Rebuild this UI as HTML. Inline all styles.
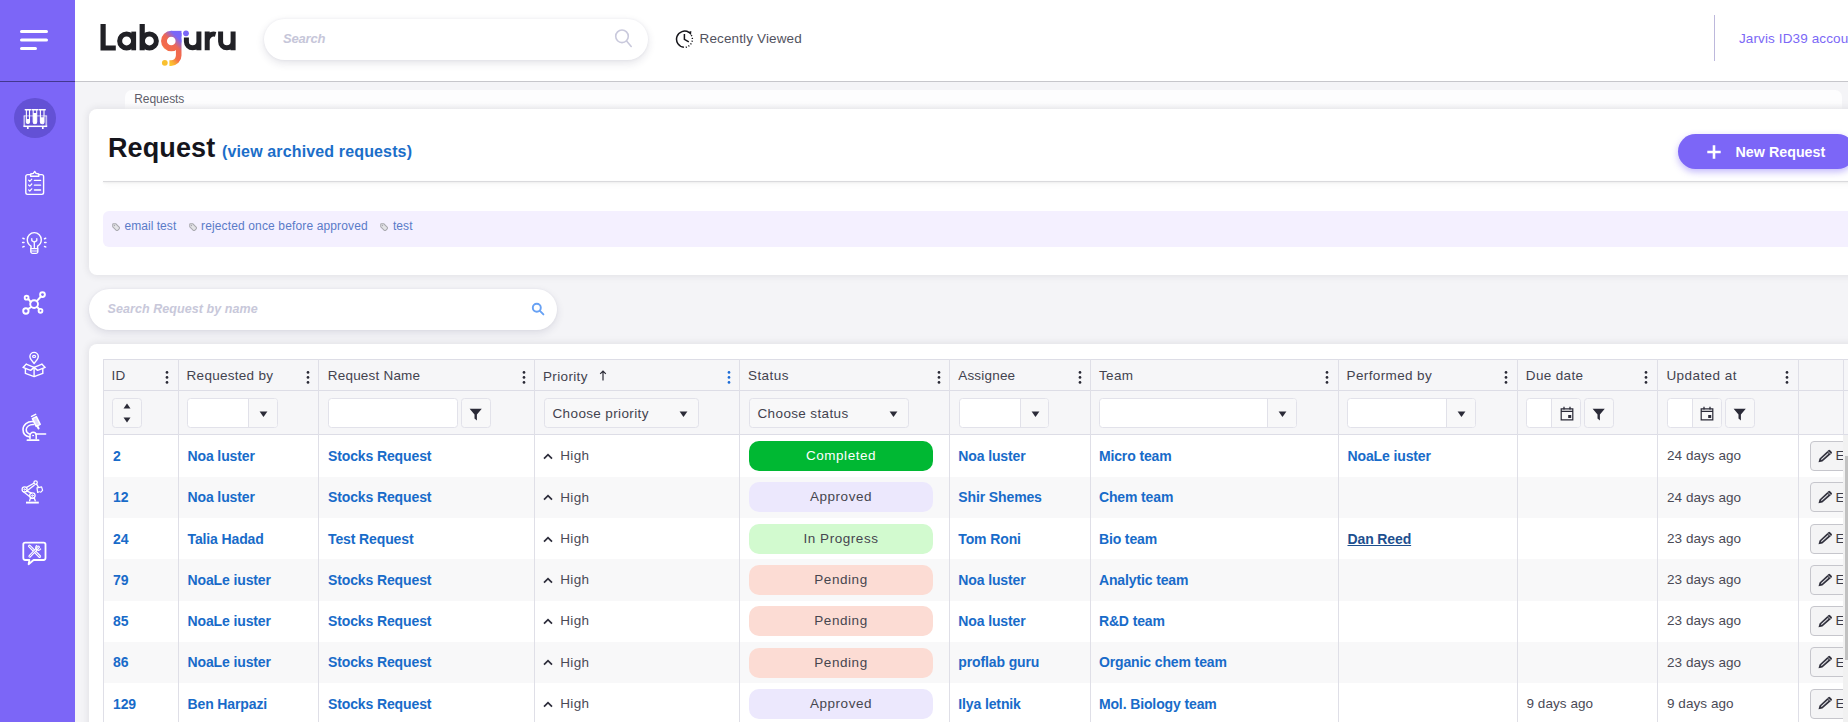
<!DOCTYPE html>
<html lang="en"><head><meta charset="utf-8"><title>Labguru - Requests</title>
<style>
*{box-sizing:border-box}
html,body{margin:0;padding:0}
body{width:1848px;height:722px;overflow:hidden;position:relative;background:#f4f4f7;font-family:"Liberation Sans",sans-serif;color:#3f3f4a;font-size:13.5px}
a{text-decoration:none;color:inherit}
#sidebar{position:absolute;left:0;top:0;width:75px;height:722px;background:#7c66f7}
#sidebar .topline{position:absolute;left:0;top:81px;width:75px;height:1px;background:#43378f}
#sidebar .act{position:absolute;left:14px;top:98px;width:42px;height:39.6px;border-radius:50%;background:#6351d5}
#sidebar svg{position:absolute}
#header{position:absolute;left:75px;top:0;width:1773px;height:81px;background:#fff}
#hline{position:absolute;left:75px;top:81px;width:1773px;height:1px;background:#c6c6cb}
#logo{position:absolute;left:95px;top:15px}
.pill{position:absolute;background:#fff;border-radius:21px}
#gsearch{left:264px;top:19px;width:384px;height:41px;box-shadow:0 3px 8px rgba(40,40,80,.13),0 0 3px rgba(40,40,80,.06)}
#gsearch .ph{position:absolute;left:19px;top:12px;font-size:13px;font-weight:bold;font-style:italic;color:#c6c6d9;letter-spacing:-.2px;line-height:15px}
#gsearch svg{position:absolute;left:348px;top:8px}
#recent{position:absolute;left:675px;top:28px}
#recent svg{position:absolute;left:0;top:.5px}
#recent .t{position:absolute;left:24.5px;top:2.5px;font-size:13.5px;color:#52525e;letter-spacing:.14px;white-space:nowrap;line-height:16px}
#hdiv{position:absolute;left:1714px;top:15px;width:1px;height:46px;background:#bdb8dc}
#acct{position:absolute;left:1739px;top:30.8px;font-size:13.5px;color:#7b68f6;white-space:nowrap;letter-spacing:.12px;line-height:16px}
#crumb{position:absolute;left:125px;top:90px;width:1717px;height:24px;border-radius:7px 7px 0 0;background:linear-gradient(#fdfdfe 0,#fdfdfe 55%,#f0f0f3 100%)}
#crumb span{position:absolute;left:9.3px;top:2px;font-size:12px;color:#5e5e6a;letter-spacing:-.09px;line-height:14px}
.card{position:absolute;background:#fff;border-radius:8px;box-shadow:0 0 8px rgba(30,30,45,.11)}
#card1{left:89px;top:109px;width:1780px;height:166px}
#title{position:absolute;left:108px;top:132.2px;font-size:27px;font-weight:bold;color:#15151c;letter-spacing:.12px;line-height:32px;white-space:nowrap}
#arch{position:absolute;left:222px;top:141.8px;font-size:16px;font-weight:bold;color:#1b6ec9;letter-spacing:.14px;line-height:20px;white-space:nowrap}
#tline{position:absolute;left:103px;top:181px;width:1760px;height:1px;background:#dadadd;box-shadow:0 1px 2px rgba(0,0,0,.10),2px 3px 5px rgba(0,0,0,.09)}
#newreq{position:absolute;left:1678px;top:134px;width:177px;height:35px;border-radius:18px;background:#7c66f7;box-shadow:0 3px 7px rgba(124,102,247,.45)}
#newreq .t{position:absolute;left:57.5px;top:9.6px;font-size:14.25px;font-weight:bold;color:#fff;line-height:17px;white-space:nowrap;letter-spacing:.03px}
#newreq svg{position:absolute;left:29px;top:11.4px}
#tags{position:absolute;left:103px;top:211px;width:1760px;height:36px;border-radius:6px;background:#f4f0ff}
#tags .tg{position:absolute;top:8px;font-size:12px;color:#5a7bc8;line-height:14px;white-space:nowrap;letter-spacing:.04px}
#tags svg{position:absolute;top:11px}
#rsearch{left:89px;top:289px;width:468px;height:41px;box-shadow:0 3px 8px rgba(40,40,80,.11),0 0 3px rgba(40,40,80,.05)}
#rsearch .ph{position:absolute;left:18.5px;top:13px;font-size:12.5px;font-weight:bold;font-style:italic;color:#c8c8da;letter-spacing:.07px;line-height:15px;white-space:nowrap}
#rsearch svg{position:absolute;left:442px;top:13px}
#card2{position:absolute;left:89px;top:344px;width:1780px;height:420px;background:#fff;border-radius:8px;box-shadow:0 0 8px rgba(30,30,45,.11)}
#grid{position:absolute;left:0;top:0;width:1848px;height:722px;letter-spacing:.2px}
.ghead{position:absolute;left:103px;top:359px;width:1760px;height:76px;background:#f6f6f8;border-top:1px solid #dddde6;border-bottom:1px solid #dddde6}
.hsep{position:absolute;left:103px;top:390px;width:1760px;height:1px;background:#dddde6}
.th{position:absolute;top:367px;line-height:16px;color:#43434f;white-space:nowrap}
.dots{position:absolute;top:371px}
.row{position:absolute;left:104px;width:1740px;height:41.25px;background:#fff}
.row.alt{background:#f8f8f9}
.row>*{position:absolute;white-space:nowrap}
.row .lk,.row .tx,.row .pri .tx{top:12.9px;line-height:16px}
.row .lk{font-weight:bold;color:#186bc9;margin-left:-104px;font-size:14px;letter-spacing:-.12px;top:12.7px}
.row .lk.ul{color:#1d4f8f;text-decoration:underline}
.row .tx{color:#4a4a56;margin-left:-104px;letter-spacing:.05px}
.row .pri{left:0;top:0}
.row .pri .tx{position:absolute;letter-spacing:.3px}
.row .chev{position:absolute;left:439px;top:17.5px}
.badge{left:645px;top:5.5px;width:184px;height:30px;border-radius:10px;text-align:center;line-height:30px;color:#46464f;letter-spacing:.55px}
.bc{background:#00b833;color:#fff}
.ba{background:#ece8fd}
.bp{background:#d2facf}
.bd{background:#fcdcd4}
.edit{left:1706px;top:5.5px;width:60px;height:30px;border:1px solid #c6c6cc;border-radius:4px;background:#f4f4f5}
.edit .pen{position:absolute;left:7px;top:6.9px}
.edit .et{position:absolute;left:24.6px;top:6.3px;line-height:16px;color:#3c3c48}
.vl{position:absolute;top:359px;width:1px;height:370px;background:#dfdfe7}
.vl2{position:absolute;left:1843px;top:359px;width:1px;height:76px;background:#dfdfe7}
.sbtrack{position:absolute;left:1843px;top:435px;width:17px;height:300px;background:#f1f1f1}
.sbthumb{position:absolute;left:1845px;top:456px;width:13px;height:204px;background:#c1c1c1}
.fbox{position:absolute;top:398px;height:30px;border:1px solid #e2e2ea;border-radius:3.5px;background:#fff;overflow:hidden}
.fbox.gray{background:#f8f8f9}
.fbox .sep{position:absolute;top:0;width:1px;height:30px;background:#e1e1e9}
.fbox .btn{position:absolute;top:0;height:30px;background:#f8f8f9}
.fbox svg{position:absolute}
.fbox .t{position:absolute;left:7.5px;top:6.5px;letter-spacing:.37px;line-height:16px;color:#43434f;white-space:nowrap}

</style></head>
<body>
<div id="sidebar">
<div class="act"></div>
<svg width="75" height="722" viewBox="0 0 75 722" fill="none" stroke="#fff" stroke-linecap="round" stroke-linejoin="round" style="left:0;top:0">
<!-- hamburger -->
<g stroke-width="3">
<path d="M21.5 31.5H46.5M21.5 40H46.5M21.5 48.5H35.5"/>
</g>
<!-- test tubes (active) -->
<g stroke-width="1.1">
<path d="M24.3 115.4V126.2M46.3 115.4V126.2" stroke-width="1.7" stroke-opacity=".62" stroke-linecap="butt"/>
<path d="M23.4 126.3H47.2" stroke-width="1.5" stroke-linecap="butt"/>
<path d="M27.8 127V129M42.8 127V129" stroke-width="1.7" stroke-linecap="butt"/>
<path d="M24.3 115.9H46.3" stroke-width="1.1" stroke-opacity=".55"/>
<path d="M25.3 109.7H30.6" stroke-width="1.5"/>
<path d="M26.4 110.2V122A1.55 1.55 0 0 0 29.5 122V110.2"/>
<path d="M26.4 118.9H29.5V122A1.55 1.55 0 0 1 26.4 122Z" fill="#fff" stroke="none"/>
<path d="M32.1 109.7H37.9" stroke-width="1.5"/>
<path d="M33.2 110.2V122A1.75 1.75 0 0 0 36.7 122V110.2"/>
<path d="M33.2 113H36.7V122A1.75 1.75 0 0 1 33.2 122Z" fill="#fff" stroke="none"/>
<path d="M39.4 109.7H45.2" stroke-width="1.5"/>
<path d="M40.4 110.2V122A1.8 1.8 0 0 0 44 122V110.2"/>
<path d="M40.4 117.2H44V122A1.8 1.8 0 0 1 40.4 122Z" fill="#fff" stroke="none"/>
</g>
<!-- clipboard -->
<g stroke-width="1.4">
<path d="M30.6 174.6H27.6A1.8 1.8 0 0 0 25.8 176.4V192.6A1.8 1.8 0 0 0 27.6 194.4H41.8A1.8 1.8 0 0 0 43.6 192.6V176.4A1.8 1.8 0 0 0 41.8 174.6H38.8"/>
<path d="M30.6 176.2V174L33.4 173.4L34.7 171.4L36 173.4L38.8 174V176.2Z"/>
<path d="M28.6 180.2L29.8 181.4L31.8 179.2M28.6 185L29.8 186.2L31.8 184M28.6 189.8L29.8 191L31.8 188.8" stroke-width="1.2"/>
<path d="M34.4 180.4H40.6M34.4 185.2H40.6M34.4 190H40.6" stroke-width="1.3"/>
</g>
<!-- bulb -->
<g stroke-width="1.4">
<path d="M31 248.4V246.2C28.6 244.8 27.3 242.4 27.3 239.6A7 7 0 0 1 41.3 239.6C41.3 242.4 40 244.8 37.6 246.2V248.4"/>
<path d="M30.8 248.6H37.8V251.6A1.8 1.8 0 0 1 36 253.4H32.6A1.8 1.8 0 0 1 30.8 251.6Z"/>
<path d="M31 251H37.6" stroke-width="1.1"/>
<path d="M34.3 247.4V242.2M31.8 238.6V240.6L34.3 242.2L36.8 240.6V238.6" stroke-width="1.3"/>
<path d="M22.9 238.3L24.1 238.7M22.6 242.6H24M22.9 246.9L24.1 246.5M45.7 238.3L44.5 238.7M46 242.6H44.6M45.7 246.9L44.5 246.5" stroke-width="1.5"/>
</g>
<!-- molecule -->
<g stroke-width="1.9">
<circle cx="34.1" cy="304.1" r="3.9"/>
<circle cx="42.5" cy="294.6" r="2.4"/>
<circle cx="26.6" cy="297.7" r="1.9"/>
<circle cx="25.9" cy="311" r="2.7"/>
<circle cx="40.5" cy="310.8" r="1.9"/>
<path d="M36.8 301.1L40.9 296.5M30.7 301.9L28.3 298.9M31.2 307L27.9 309.1M37.2 307L39.2 309.2"/>
</g>
<!-- box with pin -->
<g stroke-width="1.4">
<path d="M34.1 363.4C31.4 360.6 29.9 358.6 29.9 356.6A4.2 4.2 0 0 1 38.3 356.6C38.3 358.6 36.8 360.6 34.1 363.4Z"/>
<ellipse cx="34.1" cy="356.4" rx="1.5" ry="1.1" stroke-width="1.2"/>
<path d="M26.2 364.2L34.1 367.4L42 364.2"/>
<path d="M26.2 364.2L23 367.4L30.6 370.4L34.1 367.4L37.6 370.4L45.2 367.4L42 364.2"/>
<path d="M25.4 368.8V373.4L34.1 376.6L42.8 373.4V368.8"/>
<path d="M34.1 368V376.4"/>
</g>
<!-- microscope -->
<g stroke-width="1.5">
<path d="M31.6 416.4L35.6 414.4" stroke-width="1.6"/>
<path d="M32.4 418.6L36.4 416.6L40.2 424.4L36.2 426.4Z" fill="#fff" fill-opacity=".75"/>
<path d="M37.4 426.2L38.6 428.4" stroke-width="2"/>
<path d="M33.4 421.6C27.4 421 23 425 23 429.6C23 433.4 25.6 436.4 29.6 437" stroke-width="1.6"/>
<path d="M33.8 424.6C29.2 424.4 26.2 426.8 26.2 429.8C26.2 431.6 27.2 433.2 29.4 434"/>
<path d="M30 438.8V435.4A3.1 3.1 0 0 1 36.2 435.4V438.8"/>
<path d="M36.4 434H45.6" stroke-width="1.6"/>
<path d="M27.4 440.2H38.6" stroke-width="1.7"/>
<circle cx="33" cy="435.6" r=".5" stroke-width="1"/>
</g>
<!-- robot arm -->
<g stroke-width="1.3">
<circle cx="24.6" cy="489.4" r="2.5"/>
<circle cx="24.6" cy="489.4" r=".7" stroke-width="1"/>
<circle cx="32.4" cy="495.6" r="2.7"/>
<circle cx="32.4" cy="495.6" r=".8" stroke-width="1"/>
<circle cx="35.6" cy="482.6" r="1.7"/>
<path d="M26.6 487.4L33.8 483.2M26.2 491.6L34.2 485.2" />
<path d="M23.2 491.6L29.8 496.8M26.6 490.8L31.4 493.2"/>
<path d="M36.6 484.2L38.4 487.2"/>
<path d="M37 487.8L41.6 486.8L42.6 490.4L40.6 492.2M37 487.8L37.6 492.4L39.4 491.8" stroke-width="1.2"/>
<path d="M29.6 500.8L30.4 498.2H34.4L35.2 500.8"/>
<path d="M26 502.6H38.8" stroke-width="1.9" stroke-linecap="butt"/>
</g>
<!-- chat with tools -->
<g stroke-width="1.8">
<path d="M25.2 542.6H43.6A1.9 1.9 0 0 1 45.5 544.5V558.1A1.9 1.9 0 0 1 43.6 560H33.6L28.6 564.2L29.4 560H25.2A1.9 1.9 0 0 1 23.3 558.1V544.5A1.9 1.9 0 0 1 25.2 542.6Z"/>
<path d="M29.4 546L39.6 556.4" stroke-width="3"/>
<path d="M29.4 546L39.6 556.4" stroke="#7c66f7" stroke-width=".9"/>
<path d="M38.6 547L29.8 556.2" stroke-width="2.8"/>
<path d="M38.6 547L29.8 556.2" stroke="#7c66f7" stroke-width=".8"/>
<path d="M36.8 545.6A2.6 2.6 0 1 0 40.6 549" stroke-width="1.3"/>
</g>
</svg>
<div class="topline"></div>
</div>
<div id="header"></div>
<div id="hline"></div>
<svg id="logo" width="150" height="60" viewBox="0 0 150 60">
<defs>
<linearGradient id="gg" gradientUnits="userSpaceOnUse" x1="88" y1="12" x2="62.5" y2="37.5">
<stop offset="0" stop-color="#7a66fa"/><stop offset=".31" stop-color="#7a66f8"/><stop offset=".52" stop-color="#ef6852"/><stop offset=".74" stop-color="#f36b4a"/><stop offset=".9" stop-color="#fbb233"/><stop offset="1" stop-color="#fdca2f"/>
</linearGradient>
</defs>
<g fill="none" stroke="#212126" stroke-width="5" stroke-linecap="butt">
<path d="M8.1 9V33H20.8" stroke-width="5.2"/>
<circle cx="31.6" cy="25.95" r="6.95"/>
<path d="M38.7 16.6V35.3" stroke-width="4.8"/>
<path d="M47.2 9V35.3" stroke-width="5.2"/>
<circle cx="54.4" cy="25.95" r="6.95"/>
<path d="M91.4 22.4V26.6A6.25 6.25 0 0 0 103.9 26.6V16.6M103.9 24V35.3"/>
<path d="M112.2 16.6V35.3M112.2 26A6.6 6.6 0 0 1 120.6 19.3"/>
<path d="M125.6 16.6V26.6A6.25 6.25 0 0 0 138.1 26.6V16.6M138.1 24V35.3"/>
</g>
<g fill="none" stroke="url(#gg)" stroke-width="5.6">
<circle cx="76.3" cy="26" r="7.3" stroke-width="5.9"/>
<path d="M76.3 18.65H86.5" stroke-width="5.6"/>
<path d="M83.7 18V40.5A7.6 7.6 0 0 1 76.1 48.1H74.4"/>
</g>
<circle cx="69.8" cy="47.8" r="2.9" fill="#f9c030"/>
<circle cx="91" cy="18.3" r="2.9" fill="#7a66f8"/>
</svg>
<div class="pill" id="gsearch"><span class="ph">Search</span>
<svg width="24" height="24" viewBox="0 0 24 24" fill="none" stroke="#c9c9dc" stroke-width="1.6" stroke-linecap="round"><circle cx="10" cy="9.3" r="6.3"/><path d="M14.6 14.1L19.2 19.4"/></svg>
</div>
<div id="recent">
<svg width="20" height="20" viewBox="0 0 20 20" fill="none" stroke="#15151a" stroke-width="1.5" stroke-linecap="butt">
<path d="M8.9 18.3A8.1 8.1 0 1 1 14 3.4"/>
<path d="M16.3 6.2A8.1 8.1 0 0 1 10.4 18.3" stroke-dasharray="1.1 1.75" stroke-width="1.4"/>
<path d="M12.7 3.2L16.3 1.9L16.1 6.1Z" fill="#15151a" stroke="none"/>
<path d="M9.4 5V10.3L13.8 12.8" stroke-width="1.5"/>
</svg>
<span class="t">Recently Viewed</span>
</div>
<div id="hdiv"></div>
<div id="acct">Jarvis ID39 account</div>
<div id="crumb"><span>Requests</span></div>
<div class="card" id="card1"></div>
<div id="title">Request</div>
<a id="arch">(view archived requests)</a>
<div id="tline"></div>
<div id="newreq">
<svg width="14" height="14" viewBox="0 0 14 14"><path d="M7 .3V13.7M.3 7H13.7" stroke="#fff" stroke-width="2.6" fill="none"/></svg>
<span class="t">New Request</span></div>
<div id="tags">
<svg style="left:8.7px;top:11.9px" width="8.4" height="8.4" viewBox="0 0 10 10"><path d="M.9 1.6A.7.7 0 0 1 1.6 .9H4.6L9.1 5.4A.8.8 0 0 1 9.1 6.5L6.5 9.1A.8.8 0 0 1 5.4 9.1L.9 4.6Z" fill="#e3e3e7" stroke="#a9a9af" stroke-width="1.25"/><circle cx="3" cy="3" r=".8" fill="#a9a9af"/></svg>
<span class="tg" style="left:21.5px">email test</span>
<svg style="left:86.0px;top:11.9px" width="8.4" height="8.4" viewBox="0 0 10 10"><path d="M.9 1.6A.7.7 0 0 1 1.6 .9H4.6L9.1 5.4A.8.8 0 0 1 9.1 6.5L6.5 9.1A.8.8 0 0 1 5.4 9.1L.9 4.6Z" fill="#e3e3e7" stroke="#a9a9af" stroke-width="1.25"/><circle cx="3" cy="3" r=".8" fill="#a9a9af"/></svg>
<span class="tg" style="left:98px;letter-spacing:.14px">rejected once before approved</span>
<svg style="left:276.7px;top:11.9px" width="8.4" height="8.4" viewBox="0 0 10 10"><path d="M.9 1.6A.7.7 0 0 1 1.6 .9H4.6L9.1 5.4A.8.8 0 0 1 9.1 6.5L6.5 9.1A.8.8 0 0 1 5.4 9.1L.9 4.6Z" fill="#e3e3e7" stroke="#a9a9af" stroke-width="1.25"/><circle cx="3" cy="3" r=".8" fill="#a9a9af"/></svg>
<span class="tg" style="left:290px">test</span>
</div>
<div class="pill" id="rsearch"><span class="ph">Search Request by name</span>
<svg width="14" height="14" viewBox="0 0 14 14" fill="none" stroke="#67a1f4" stroke-width="1.9" stroke-linecap="round"><circle cx="5.8" cy="5.8" r="4"/><path d="M8.9 8.9L12.4 12.4"/></svg>
</div>
<div id="card2"></div>
<div id="grid">
<div class="ghead"></div>
<div class="hsep"></div>
<span class="th" style="left:111.6px;top:367.7px;letter-spacing:0.2px">ID</span><svg class="dots" style="left:165.0px" width="4" height="13" viewBox="0 0 4 13"><g fill="#2a2a36"><circle cx="2" cy="1.4" r="1.35"/><circle cx="2" cy="6.4" r="1.35"/><circle cx="2" cy="11.4" r="1.35"/></g></svg>
<span class="th" style="left:186.6px;top:367.7px;letter-spacing:0.28px">Requested by</span><svg class="dots" style="left:305.5px" width="4" height="13" viewBox="0 0 4 13"><g fill="#2a2a36"><circle cx="2" cy="1.4" r="1.35"/><circle cx="2" cy="6.4" r="1.35"/><circle cx="2" cy="11.4" r="1.35"/></g></svg>
<span class="th" style="left:327.8px;top:367.7px;letter-spacing:0.2px">Request Name</span><svg class="dots" style="left:521.5px" width="4" height="13" viewBox="0 0 4 13"><g fill="#2a2a36"><circle cx="2" cy="1.4" r="1.35"/><circle cx="2" cy="6.4" r="1.35"/><circle cx="2" cy="11.4" r="1.35"/></g></svg>
<span class="th" style="left:543.0px;top:368.7px;letter-spacing:0.35px">Priority</span><svg class="dots" style="left:726.5px" width="4" height="13" viewBox="0 0 4 13"><g fill="#1c6bd6"><circle cx="2" cy="1.4" r="1.35"/><circle cx="2" cy="6.4" r="1.35"/><circle cx="2" cy="11.4" r="1.35"/></g></svg>
<span class="th" style="left:748.0px;top:367.7px;letter-spacing:0.43px">Status</span><svg class="dots" style="left:936.5px" width="4" height="13" viewBox="0 0 4 13"><g fill="#2a2a36"><circle cx="2" cy="1.4" r="1.35"/><circle cx="2" cy="6.4" r="1.35"/><circle cx="2" cy="11.4" r="1.35"/></g></svg>
<span class="th" style="left:958.2px;top:367.7px;letter-spacing:0.2px">Assignee</span><svg class="dots" style="left:1077.5px" width="4" height="13" viewBox="0 0 4 13"><g fill="#2a2a36"><circle cx="2" cy="1.4" r="1.35"/><circle cx="2" cy="6.4" r="1.35"/><circle cx="2" cy="11.4" r="1.35"/></g></svg>
<span class="th" style="left:1098.9px;top:367.7px;letter-spacing:0.37px">Team</span><svg class="dots" style="left:1325.0px" width="4" height="13" viewBox="0 0 4 13"><g fill="#2a2a36"><circle cx="2" cy="1.4" r="1.35"/><circle cx="2" cy="6.4" r="1.35"/><circle cx="2" cy="11.4" r="1.35"/></g></svg>
<span class="th" style="left:1346.6px;top:367.7px;letter-spacing:0.37px">Performed by</span><svg class="dots" style="left:1504.0px" width="4" height="13" viewBox="0 0 4 13"><g fill="#2a2a36"><circle cx="2" cy="1.4" r="1.35"/><circle cx="2" cy="6.4" r="1.35"/><circle cx="2" cy="11.4" r="1.35"/></g></svg>
<span class="th" style="left:1525.8px;top:367.7px;letter-spacing:0.36px">Due date</span><svg class="dots" style="left:1644.4px" width="4" height="13" viewBox="0 0 4 13"><g fill="#2a2a36"><circle cx="2" cy="1.4" r="1.35"/><circle cx="2" cy="6.4" r="1.35"/><circle cx="2" cy="11.4" r="1.35"/></g></svg>
<span class="th" style="left:1666.4px;top:367.7px;letter-spacing:0.44px">Updated at</span><svg class="dots" style="left:1785.3px" width="4" height="13" viewBox="0 0 4 13"><g fill="#2a2a36"><circle cx="2" cy="1.4" r="1.35"/><circle cx="2" cy="6.4" r="1.35"/><circle cx="2" cy="11.4" r="1.35"/></g></svg>
<svg style="position:absolute;left:598.5px;top:369.5px" width="8" height="11" viewBox="0 0 8 11"><path d="M4 10.4V1.2M1.2 3.8L4 1L6.8 3.8" fill="none" stroke="#2a2a36" stroke-width="1.2"/></svg>
<div class="fbox gray" style="left:112.0px;width:30.0px"><svg style="left:10.4px;top:4.3px" width="8" height="6" viewBox="0 0 8 6"><path d="M.5 5.4H7.5L4 .6Z" fill="#2b2b38"/></svg><svg style="left:10.4px;top:17.9px" width="8" height="6" viewBox="0 0 8 6"><path d="M.5 .6H7.5L4 5.4Z" fill="#2b2b38"/></svg></div>
<div class="fbox " style="left:187.0px;width:91.0px"><div class="btn" style="left:61.4px;width:29.6px"></div><div class="sep" style="left:60.4px"></div><svg style="left:70.7px;top:11.9px" width="9" height="7" viewBox="0 0 9 7"><path d="M.6 .4H8.4L4.5 6.1Z" fill="#2b2b38"/></svg></div>
<div class="fbox " style="left:328.0px;width:130.0px"></div>
<div class="fbox gray" style="left:461.0px;width:30.0px"><svg style="left:6.9px;top:9.2px" width="14" height="14" viewBox="0 0 14 14"><path d="M.6 .8H12.8L7.9 6.4V12.4L5.5 10.4V6.4Z" fill="#2b2b38"/></svg></div>
<div class="fbox gray" style="left:544.0px;width:155.0px"><span class="t">Choose priority</span><svg style="left:134.0px;top:11.9px" width="9" height="7" viewBox="0 0 9 7"><path d="M.6 .4H8.4L4.5 6.1Z" fill="#2b2b38"/></svg></div>
<div class="fbox gray" style="left:749.0px;width:160.0px"><span class="t">Choose status</span><svg style="left:139.0px;top:11.9px" width="9" height="7" viewBox="0 0 9 7"><path d="M.6 .4H8.4L4.5 6.1Z" fill="#2b2b38"/></svg></div>
<div class="fbox " style="left:959.0px;width:90.0px"><div class="btn" style="left:60.5px;width:29.5px"></div><div class="sep" style="left:59.5px"></div><svg style="left:70.5px;top:11.9px" width="9" height="7" viewBox="0 0 9 7"><path d="M.6 .4H8.4L4.5 6.1Z" fill="#2b2b38"/></svg></div>
<div class="fbox " style="left:1099.0px;width:198.0px"><div class="btn" style="left:168.2px;width:29.8px"></div><div class="sep" style="left:167.2px"></div><svg style="left:178.0px;top:11.9px" width="9" height="7" viewBox="0 0 9 7"><path d="M.6 .4H8.4L4.5 6.1Z" fill="#2b2b38"/></svg></div>
<div class="fbox " style="left:1347.0px;width:129.0px"><div class="btn" style="left:99.4px;width:29.6px"></div><div class="sep" style="left:98.4px"></div><svg style="left:109.1px;top:11.9px" width="9" height="7" viewBox="0 0 9 7"><path d="M.6 .4H8.4L4.5 6.1Z" fill="#2b2b38"/></svg></div>
<div class="fbox " style="left:1526.0px;width:55.0px"><div class="btn" style="left:25.0px;width:30.0px"></div><div class="sep" style="left:24.0px"></div><svg style="left:32.8px;top:6.8px" width="14" height="15" viewBox="0 0 14 15"><path d="M1.2 2.8H12.8V13.8H1.2Z M1.2 5.4H12.8" fill="none" stroke="#2b2b38" stroke-width="1.2"/><path d="M4 .8V3.4M10 .8V3.4" stroke="#2b2b38" stroke-width="1.3"/><rect x="8.2" y="9" width="3" height="3" fill="#2b2b38"/></svg></div>
<div class="fbox gray" style="left:1584.0px;width:30.0px"><svg style="left:7.1px;top:9.2px" width="14" height="14" viewBox="0 0 14 14"><path d="M.6 .8H12.8L7.9 6.4V12.4L5.5 10.4V6.4Z" fill="#2b2b38"/></svg></div>
<div class="fbox " style="left:1667.0px;width:55.0px"><div class="btn" style="left:24.8px;width:30.2px"></div><div class="sep" style="left:23.8px"></div><svg style="left:32.4px;top:6.8px" width="14" height="15" viewBox="0 0 14 15"><path d="M1.2 2.8H12.8V13.8H1.2Z M1.2 5.4H12.8" fill="none" stroke="#2b2b38" stroke-width="1.2"/><path d="M4 .8V3.4M10 .8V3.4" stroke="#2b2b38" stroke-width="1.3"/><rect x="8.2" y="9" width="3" height="3" fill="#2b2b38"/></svg></div>
<div class="fbox gray" style="left:1725.0px;width:30.0px"><svg style="left:7.0px;top:9.2px" width="14" height="14" viewBox="0 0 14 14"><path d="M.6 .8H12.8L7.9 6.4V12.4L5.5 10.4V6.4Z" fill="#2b2b38"/></svg></div>
<div class="row" style="top:435.5px"><a class="lk" style="left:113px">2</a><a class="lk" style="left:187.5px">Noa luster</a><a class="lk" style="left:328px">Stocks Request</a><span class="pri"><svg class="chev" width="10" height="7" viewBox="0 0 10 7"><path d="M1 5.6 L5 1.6 L9 5.6" fill="none" stroke="#2c2c3a" stroke-width="1.7"/></svg><span class="tx" style="left:560.3px">High</span></span><span class="badge bc">Completed</span><a class="lk" style="left:958.3px">Noa luster</a><a class="lk" style="left:1098.9px">Micro team</a><a class="lk" style="left:1347.5px">NoaLe iuster</a><span class="tx" style="left:1667px">24 days ago</span><span class="edit"><svg class="pen" width="15" height="14" viewBox="0 0 15 14"><path d="M.5 13.3L1.5 9.5L10.3 1.2A1.25 1.25 0 0 1 12.1 1.2L13.6 2.7A1.25 1.25 0 0 1 13.6 4.5L4.4 12.6Z" fill="#32323e"/><path d="M3.3 10.7L10.2 4.3" stroke="#e6e6ea" stroke-width="1.1"/><path d="M10.1 2.5L12.4 4.8" stroke="#f4f4f5" stroke-width=".8"/></svg><span class="et">Edit</span></span></div>
<div class="row alt" style="top:476.75px"><a class="lk" style="left:113px">12</a><a class="lk" style="left:187.5px">Noa luster</a><a class="lk" style="left:328px">Stocks Request</a><span class="pri"><svg class="chev" width="10" height="7" viewBox="0 0 10 7"><path d="M1 5.6 L5 1.6 L9 5.6" fill="none" stroke="#2c2c3a" stroke-width="1.7"/></svg><span class="tx" style="left:560.3px">High</span></span><span class="badge ba">Approved</span><a class="lk" style="left:958.3px">Shir Shemes</a><a class="lk" style="left:1098.9px">Chem team</a><span class="tx" style="left:1667px">24 days ago</span><span class="edit"><svg class="pen" width="15" height="14" viewBox="0 0 15 14"><path d="M.5 13.3L1.5 9.5L10.3 1.2A1.25 1.25 0 0 1 12.1 1.2L13.6 2.7A1.25 1.25 0 0 1 13.6 4.5L4.4 12.6Z" fill="#32323e"/><path d="M3.3 10.7L10.2 4.3" stroke="#e6e6ea" stroke-width="1.1"/><path d="M10.1 2.5L12.4 4.8" stroke="#f4f4f5" stroke-width=".8"/></svg><span class="et">Edit</span></span></div>
<div class="row" style="top:518.0px"><a class="lk" style="left:113px">24</a><a class="lk" style="left:187.5px">Talia Hadad</a><a class="lk" style="left:328px">Test Request</a><span class="pri"><svg class="chev" width="10" height="7" viewBox="0 0 10 7"><path d="M1 5.6 L5 1.6 L9 5.6" fill="none" stroke="#2c2c3a" stroke-width="1.7"/></svg><span class="tx" style="left:560.3px">High</span></span><span class="badge bp">In Progress</span><a class="lk" style="left:958.3px">Tom Roni</a><a class="lk" style="left:1098.9px">Bio team</a><a class="lk ul" style="left:1347.5px">Dan Reed</a><span class="tx" style="left:1667px">23 days ago</span><span class="edit"><svg class="pen" width="15" height="14" viewBox="0 0 15 14"><path d="M.5 13.3L1.5 9.5L10.3 1.2A1.25 1.25 0 0 1 12.1 1.2L13.6 2.7A1.25 1.25 0 0 1 13.6 4.5L4.4 12.6Z" fill="#32323e"/><path d="M3.3 10.7L10.2 4.3" stroke="#e6e6ea" stroke-width="1.1"/><path d="M10.1 2.5L12.4 4.8" stroke="#f4f4f5" stroke-width=".8"/></svg><span class="et">Edit</span></span></div>
<div class="row alt" style="top:559.25px"><a class="lk" style="left:113px">79</a><a class="lk" style="left:187.5px">NoaLe iuster</a><a class="lk" style="left:328px">Stocks Request</a><span class="pri"><svg class="chev" width="10" height="7" viewBox="0 0 10 7"><path d="M1 5.6 L5 1.6 L9 5.6" fill="none" stroke="#2c2c3a" stroke-width="1.7"/></svg><span class="tx" style="left:560.3px">High</span></span><span class="badge bd">Pending</span><a class="lk" style="left:958.3px">Noa luster</a><a class="lk" style="left:1098.9px">Analytic team</a><span class="tx" style="left:1667px">23 days ago</span><span class="edit"><svg class="pen" width="15" height="14" viewBox="0 0 15 14"><path d="M.5 13.3L1.5 9.5L10.3 1.2A1.25 1.25 0 0 1 12.1 1.2L13.6 2.7A1.25 1.25 0 0 1 13.6 4.5L4.4 12.6Z" fill="#32323e"/><path d="M3.3 10.7L10.2 4.3" stroke="#e6e6ea" stroke-width="1.1"/><path d="M10.1 2.5L12.4 4.8" stroke="#f4f4f5" stroke-width=".8"/></svg><span class="et">Edit</span></span></div>
<div class="row" style="top:600.5px"><a class="lk" style="left:113px">85</a><a class="lk" style="left:187.5px">NoaLe iuster</a><a class="lk" style="left:328px">Stocks Request</a><span class="pri"><svg class="chev" width="10" height="7" viewBox="0 0 10 7"><path d="M1 5.6 L5 1.6 L9 5.6" fill="none" stroke="#2c2c3a" stroke-width="1.7"/></svg><span class="tx" style="left:560.3px">High</span></span><span class="badge bd">Pending</span><a class="lk" style="left:958.3px">Noa luster</a><a class="lk" style="left:1098.9px">R&amp;D team</a><span class="tx" style="left:1667px">23 days ago</span><span class="edit"><svg class="pen" width="15" height="14" viewBox="0 0 15 14"><path d="M.5 13.3L1.5 9.5L10.3 1.2A1.25 1.25 0 0 1 12.1 1.2L13.6 2.7A1.25 1.25 0 0 1 13.6 4.5L4.4 12.6Z" fill="#32323e"/><path d="M3.3 10.7L10.2 4.3" stroke="#e6e6ea" stroke-width="1.1"/><path d="M10.1 2.5L12.4 4.8" stroke="#f4f4f5" stroke-width=".8"/></svg><span class="et">Edit</span></span></div>
<div class="row alt" style="top:641.75px"><a class="lk" style="left:113px">86</a><a class="lk" style="left:187.5px">NoaLe iuster</a><a class="lk" style="left:328px">Stocks Request</a><span class="pri"><svg class="chev" width="10" height="7" viewBox="0 0 10 7"><path d="M1 5.6 L5 1.6 L9 5.6" fill="none" stroke="#2c2c3a" stroke-width="1.7"/></svg><span class="tx" style="left:560.3px">High</span></span><span class="badge bd" style="top:6.5px">Pending</span><a class="lk" style="left:958.3px">proflab guru</a><a class="lk" style="left:1098.9px">Organic chem team</a><span class="tx" style="left:1667px">23 days ago</span><span class="edit"><svg class="pen" width="15" height="14" viewBox="0 0 15 14"><path d="M.5 13.3L1.5 9.5L10.3 1.2A1.25 1.25 0 0 1 12.1 1.2L13.6 2.7A1.25 1.25 0 0 1 13.6 4.5L4.4 12.6Z" fill="#32323e"/><path d="M3.3 10.7L10.2 4.3" stroke="#e6e6ea" stroke-width="1.1"/><path d="M10.1 2.5L12.4 4.8" stroke="#f4f4f5" stroke-width=".8"/></svg><span class="et">Edit</span></span></div>
<div class="row last" style="top:683.0px"><a class="lk" style="left:113px">129</a><a class="lk" style="left:187.5px">Ben Harpazi</a><a class="lk" style="left:328px">Stocks Request</a><span class="pri"><svg class="chev" width="10" height="7" viewBox="0 0 10 7"><path d="M1 5.6 L5 1.6 L9 5.6" fill="none" stroke="#2c2c3a" stroke-width="1.7"/></svg><span class="tx" style="left:560.3px">High</span></span><span class="badge ba">Approved</span><a class="lk" style="left:958.3px">Ilya letnik</a><a class="lk" style="left:1098.9px">Mol. Biology team</a><span class="tx" style="left:1526.5px">9 days ago</span><span class="tx" style="left:1667px">9 days ago</span><span class="edit"><svg class="pen" width="15" height="14" viewBox="0 0 15 14"><path d="M.5 13.3L1.5 9.5L10.3 1.2A1.25 1.25 0 0 1 12.1 1.2L13.6 2.7A1.25 1.25 0 0 1 13.6 4.5L4.4 12.6Z" fill="#32323e"/><path d="M3.3 10.7L10.2 4.3" stroke="#e6e6ea" stroke-width="1.1"/><path d="M10.1 2.5L12.4 4.8" stroke="#f4f4f5" stroke-width=".8"/></svg><span class="et">Edit</span></span></div>
<div class="row alt last" style="top:724.25px"><a class="lk" style="left:113px">130</a><a class="lk" style="left:187.5px">Ben Harpazi</a><a class="lk" style="left:328px">Stocks Request</a><span class="pri"><svg class="chev" width="10" height="7" viewBox="0 0 10 7"><path d="M1 5.6 L5 1.6 L9 5.6" fill="none" stroke="#2c2c3a" stroke-width="1.7"/></svg><span class="tx" style="left:560.3px">High</span></span><span class="badge ba">Approved</span><a class="lk" style="left:958.3px">Ilya letnik</a><a class="lk" style="left:1098.9px">Mol. Biology team</a><span class="tx" style="left:1667px">9 days ago</span><span class="edit"><svg class="pen" width="15" height="14" viewBox="0 0 15 14"><path d="M.5 13.3L1.5 9.5L10.3 1.2A1.25 1.25 0 0 1 12.1 1.2L13.6 2.7A1.25 1.25 0 0 1 13.6 4.5L4.4 12.6Z" fill="#32323e"/><path d="M3.3 10.7L10.2 4.3" stroke="#e6e6ea" stroke-width="1.1"/><path d="M10.1 2.5L12.4 4.8" stroke="#f4f4f5" stroke-width=".8"/></svg><span class="et">Edit</span></span></div>
<div class="vl" style="left:103px"></div><div class="vl" style="left:178px"></div><div class="vl" style="left:318px"></div><div class="vl" style="left:534px"></div><div class="vl" style="left:739px"></div><div class="vl" style="left:949px"></div><div class="vl" style="left:1090px"></div><div class="vl" style="left:1338px"></div><div class="vl" style="left:1517px"></div><div class="vl" style="left:1657px"></div><div class="vl" style="left:1798px"></div>
<div class="vl2"></div><div class="sbtrack"></div><div class="sbthumb"></div>
</div>
</body></html>
